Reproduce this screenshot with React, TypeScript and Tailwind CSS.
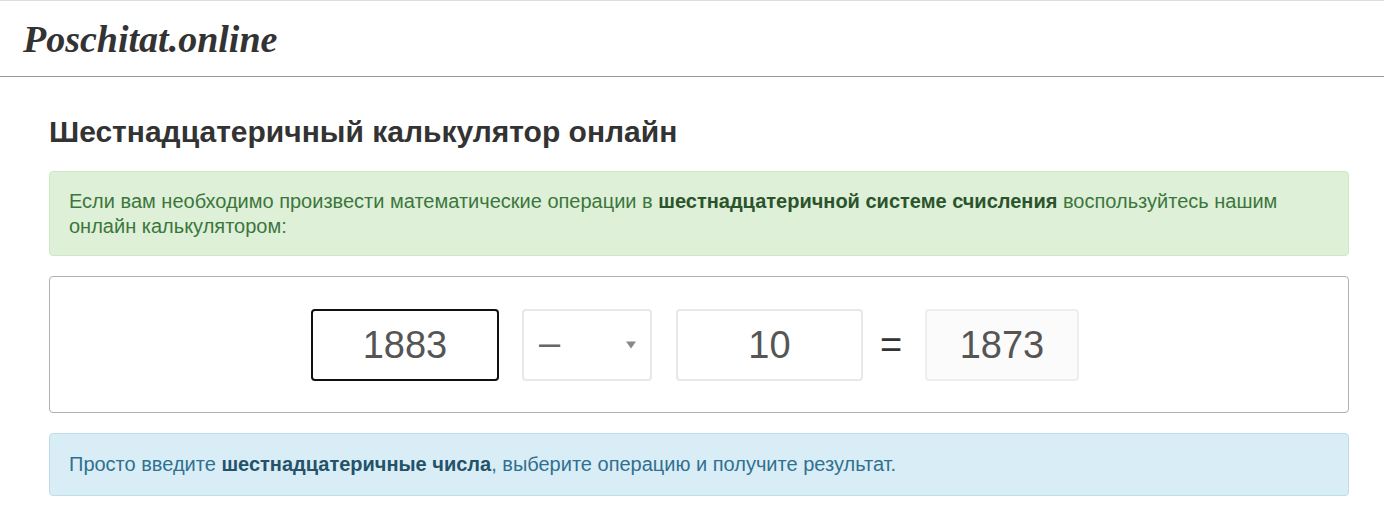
export default function App() {
  return (
    <div className="min-h-screen bg-white font-['Liberation_Sans',Arial,sans-serif] text-[#333]">
      <header className="h-[77px] border-t border-b border-t-[#dddddd] border-b-[#999999] flex items-center">
        <a
          href="#"
          className="ml-[23px] mt-[1px] font-['Liberation_Serif','Times_New_Roman',serif] text-[38px] font-bold italic leading-none text-[#333]"
        >
          Poschitat.online
        </a>
      </header>

      <main className="pl-[49px] pr-[35px] pt-[38px]">
        <h1 className="text-[30px] font-bold leading-[34px] text-[#333]">
          Шестнадцатеричный калькулятор онлайн
        </h1>

        <div className="mt-[22px] rounded border border-[#cde8c2] bg-[#dff0d8] px-[19px] pt-[17px] pb-[16px] text-[20px] leading-[25px] text-[#3c763d]">
          Если вам необходимо произвести математические операции в{' '}
          <b className="text-[#2b542c]">шестнадцатеричной системе счисления</b> воспользуйтесь нашим
          онлайн калькулятором:
        </div>

        <div className="mt-[20px] rounded border border-[#b0b0b0] pt-[32px] pb-[31px] pr-[8px] flex items-center justify-center">
          <input
            defaultValue="1883"
            className="h-[72px] w-[188px] rounded border-2 border-[#111] bg-white text-center text-[38px] text-[#555] outline-none"
          />
          <div className="relative ml-[23px] h-[72px] w-[130px] rounded border-2 border-[#e8e8e8] bg-white flex items-center pl-[15px]">
            <span className="text-[38px] leading-none text-[#666] -mt-[4px]">–</span>
            <span className="absolute right-[14px] top-1/2 -translate-y-1/2 h-0 w-0 border-x-[5px] border-t-[7px] border-x-transparent border-t-[#888]" />
          </div>
          <input
            defaultValue="10"
            className="ml-[24px] h-[72px] w-[187px] rounded border-2 border-[#e8e8e8] bg-white text-center text-[38px] text-[#555] outline-none"
          />
          <span className="ml-[17px] w-[20px] text-center text-[38px] leading-none text-[#333]">=</span>
          <input
            readOnly
            defaultValue="1873"
            className="ml-[25px] h-[72px] w-[154px] rounded border-2 border-[#eeeeee] bg-[#fbfbfb] text-center text-[38px] text-[#555] outline-none"
          />
        </div>

        <div className="mt-[20px] rounded border border-[#bcdde9] bg-[#d9edf7] px-[19px] py-[18px] text-[20px] leading-[25px] text-[#31708f]">
          Просто введите <b className="text-[#245269]">шестнадцатеричные числа</b>, выберите операцию и
          получите результат.
        </div>
      </main>
    </div>
  )
}
